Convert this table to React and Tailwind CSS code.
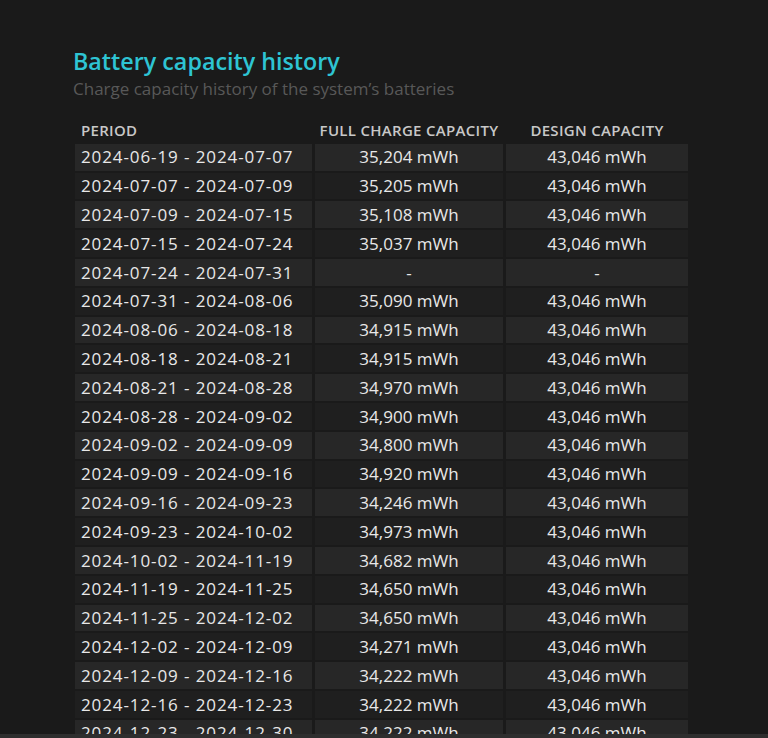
import React from "react";

const rows = [
  ["2024-06-19 - 2024-07-07", "35,204 mWh", "43,046 mWh"],
  ["2024-07-07 - 2024-07-09", "35,205 mWh", "43,046 mWh"],
  ["2024-07-09 - 2024-07-15", "35,108 mWh", "43,046 mWh"],
  ["2024-07-15 - 2024-07-24", "35,037 mWh", "43,046 mWh"],
  ["2024-07-24 - 2024-07-31", "-", "-"],
  ["2024-07-31 - 2024-08-06", "35,090 mWh", "43,046 mWh"],
  ["2024-08-06 - 2024-08-18", "34,915 mWh", "43,046 mWh"],
  ["2024-08-18 - 2024-08-21", "34,915 mWh", "43,046 mWh"],
  ["2024-08-21 - 2024-08-28", "34,970 mWh", "43,046 mWh"],
  ["2024-08-28 - 2024-09-02", "34,900 mWh", "43,046 mWh"],
  ["2024-09-02 - 2024-09-09", "34,800 mWh", "43,046 mWh"],
  ["2024-09-09 - 2024-09-16", "34,920 mWh", "43,046 mWh"],
  ["2024-09-16 - 2024-09-23", "34,246 mWh", "43,046 mWh"],
  ["2024-09-23 - 2024-10-02", "34,973 mWh", "43,046 mWh"],
  ["2024-10-02 - 2024-11-19", "34,682 mWh", "43,046 mWh"],
  ["2024-11-19 - 2024-11-25", "34,650 mWh", "43,046 mWh"],
  ["2024-11-25 - 2024-12-02", "34,650 mWh", "43,046 mWh"],
  ["2024-12-02 - 2024-12-09", "34,271 mWh", "43,046 mWh"],
  ["2024-12-09 - 2024-12-16", "34,222 mWh", "43,046 mWh"],
  ["2024-12-16 - 2024-12-23", "34,222 mWh", "43,046 mWh"],
  ["2024-12-23 - 2024-12-30", "34,222 mWh", "43,046 mWh"],
];

export default function App() {
  return (
    <div
      className="relative h-[738px] w-[768px] overflow-hidden bg-[#1a1a1a]"
      style={{ fontFamily: '"Open Sans", "Noto Sans", sans-serif' }}
    >
      <div className="pl-[73px] pt-[44px]">
        <h1 className="text-[23.3px] leading-[34px] font-semibold text-[#2ec4d3] whitespace-nowrap">
          Battery capacity history
        </h1>
        <p className="text-[17px] leading-[22px] text-[#585858] whitespace-nowrap">
          Charge capacity history of the system’s batteries
        </p>
        <div className="mt-[15px] ml-[2px] grid grid-cols-[237px_188px_182px] gap-x-[3px] gap-y-[2px] auto-rows-[26.8px]">
          <div className="flex items-center px-[6px] text-[15px] tracking-[0.3px] font-semibold text-[#c8c8c8] h-[24px] self-end">
            PERIOD
          </div>
          <div className="flex items-center justify-center text-[15px] tracking-[0.3px] font-semibold text-[#c8c8c8] h-[24px] self-end whitespace-nowrap">
            FULL CHARGE CAPACITY
          </div>
          <div className="flex items-center justify-center text-[15px] tracking-[0.3px] font-semibold text-[#c8c8c8] h-[24px] self-end whitespace-nowrap">
            DESIGN CAPACITY
          </div>
          {rows.map((r, i) => {
            const bg = i % 2 === 0 ? "bg-[#272727]" : "bg-[#1f1f1f]";
            return (
              <React.Fragment key={i}>
                <div className={`${bg} flex items-center px-[6px] text-[17px] tracking-[0.9px] text-[#e8e8e8] whitespace-nowrap`}>
                  {r[0]}
                </div>
                <div className={`${bg} flex items-center justify-center text-[17px] text-[#e8e8e8] whitespace-nowrap`}>
                  {r[1]}
                </div>
                <div className={`${bg} flex items-center justify-center text-[17px] text-[#e8e8e8] whitespace-nowrap`}>
                  {r[2]}
                </div>
              </React.Fragment>
            );
          })}
        </div>
      </div>
      <div className="absolute bottom-0 left-0 right-0 h-[4px] bg-[#2e2e2e]" />
    </div>
  );
}
